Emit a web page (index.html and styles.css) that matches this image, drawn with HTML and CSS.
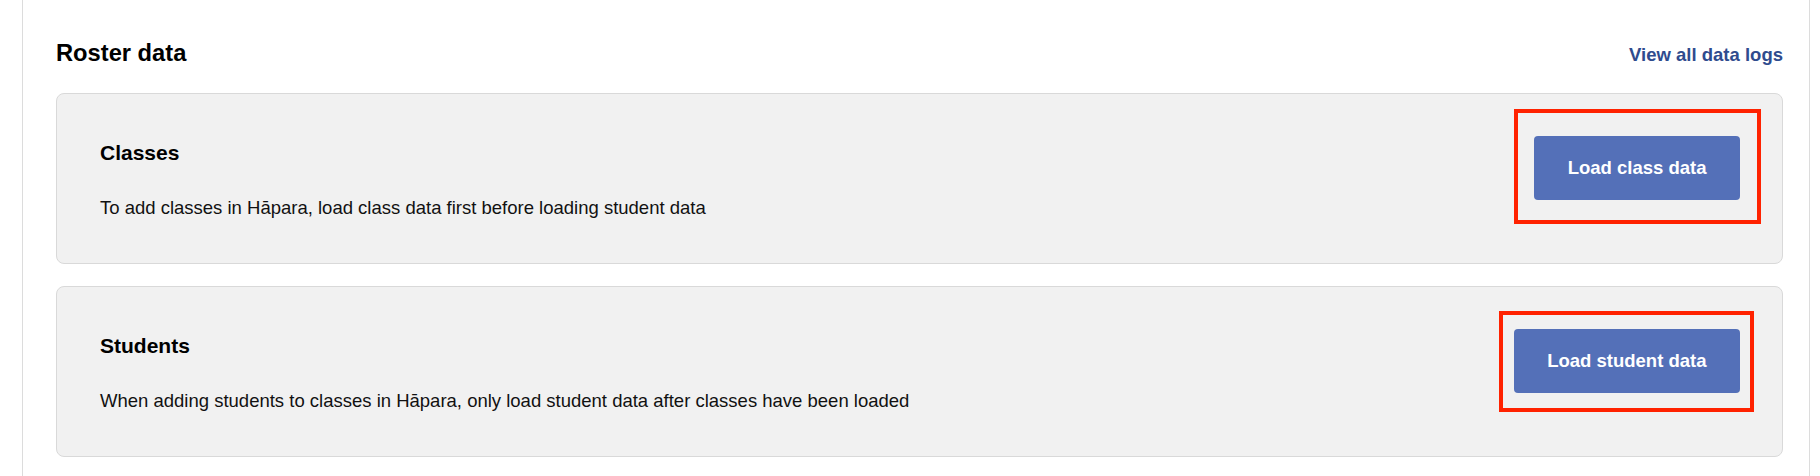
FILE: index.html
```html
<!DOCTYPE html>
<html lang="en">
<head>
<meta charset="utf-8">
<title>Roster data</title>
<link rel="stylesheet" href="styles.css">
</head>
<body>
<div class="page">
  <section class="roster">
    <header class="roster-header">
      <h2 class="roster-title">Roster data</h2>
      <a class="logs-link" href="#">View all data logs</a>
    </header>
    <div class="card">
      <div class="card-text">
        <h3 class="card-title">Classes</h3>
        <p class="card-desc">To add classes in Hāpara, load class data first before loading student data</p>
      </div>
      <div class="btn-wrap mark-a">
        <button class="btn" type="button">Load class data</button>
      </div>
    </div>
    <div class="card">
      <div class="card-text">
        <h3 class="card-title">Students</h3>
        <p class="card-desc">When adding students to classes in Hāpara, only load student data after classes have been loaded</p>
      </div>
      <div class="btn-wrap mark-b">
        <button class="btn" type="button">Load student data</button>
      </div>
    </div>
  </section>
</div>
</body>
</html>
```

FILE: styles.css
```css
html, body {
  margin: 0;
  padding: 0;
  background: #ffffff;
}

body {
  font-family: "Liberation Sans", Arial, Helvetica, sans-serif;
  color: #000;
  height: 476px;
  overflow: hidden;
}

.page {
  margin-left: 22px;
  width: 1788px;
  height: 476px;
  box-sizing: border-box;
  border-left: 1px solid #dcdcdc;
  border-right: 1px solid #dcdcdc;
  padding: 39px 26px 0 33px;
}

.roster {
  display: flex;
  flex-direction: column;
  gap: 22px;
}

.roster-header {
  display: flex;
  justify-content: space-between;
  align-items: baseline;
  margin-bottom: 2px;
}

.roster-title {
  margin: 0;
  font-size: 23.7px;
  line-height: 28px;
  font-weight: 700;
  color: #000;
}

.logs-link {
  font-size: 18.5px;
  line-height: 28px;
  font-weight: 700;
  color: #2f4b8e;
  text-decoration: none;
}

.card {
  display: flex;
  justify-content: space-between;
  align-items: flex-start;
  background: #f1f1f1;
  border: 1px solid #d9d9d9;
  border-radius: 8px;
  padding: 42px 42px 43px 43px;
}

.card-text {
  padding-top: 5px;
}

.card-title {
  margin: 0;
  font-size: 21px;
  line-height: 24px;
  font-weight: 700;
  color: #000;
}

.card-desc {
  margin: 31px 0 0 0;
  font-size: 18.5px;
  line-height: 24px;
  color: #111;
}

.btn-wrap {
  position: relative;
}

.btn-wrap::after {
  content: "";
  position: absolute;
  border: 4px solid #ff2200;
  pointer-events: none;
}

.mark-a::after {
  top: -27px;
  left: -20px;
  right: -21px;
  bottom: -24px;
}

.mark-b::after {
  top: -18px;
  left: -15px;
  right: -14px;
  bottom: -19px;
}

.btn {
  display: block;
  height: 64px;
  padding: 0 33.5px;
  border: none;
  border-radius: 4px;
  background: #5470b8;
  color: #fff;
  font-family: "Liberation Sans", Arial, Helvetica, sans-serif;
  font-size: 18.5px;
  font-weight: 700;
  line-height: 64px;
  cursor: pointer;
}
```
